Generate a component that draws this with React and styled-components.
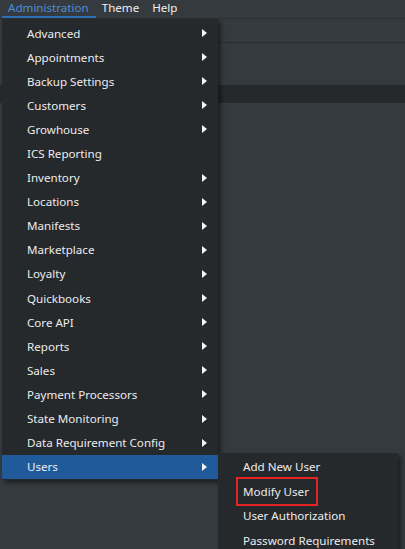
import React from "react";
import styled, { createGlobalStyle } from "styled-components";

const GlobalStyle = createGlobalStyle`
  html, body {
    margin: 0;
    padding: 0;
    background: #353a3e;
    font-family: "Noto Sans", "Open Sans", sans-serif;
    font-size: 12px;
    color: #e6e6e6;
  }
`;

const Page = styled.div`
  position: relative;
  width: 405px;
  height: 549px;
  overflow: hidden;
  background: #353a3e;
`;

const MenuBar = styled.div`
  display: flex;
  height: 18px;
  padding-left: 2px;
  border-bottom: 1px solid #2b2f32;
  background: #353a3e;
`;

const MenuTitle = styled.div`
  padding: 0 7px 0 6px;
  height: 16px;
  line-height: 16px;
  font-size: 11.6px;
  color: ${(p) => (p.$active ? "#4b8fd8" : "#f0f0f0")};
  border-bottom: 2px solid ${(p) => (p.$active ? "#2f6fb5" : "transparent")};
`;

const Band = styled.div`
  height: ${(p) => p.$h}px;
  background: ${(p) => p.$bg || "#353a3e"};
  border-bottom: ${(p) => (p.$line ? "1px solid #2a2e31" : "none")};
`;

const Dropdown = styled.ul`
  position: absolute;
  left: 2px;
  top: 19px;
  width: 216px;
  margin: 0;
  padding: 2px 0 1px;
  list-style: none;
  background: #25292c;
  box-shadow: 3px 3px 4px rgba(0, 0, 0, 0.45);
`;

const Item = styled.li`
  position: relative;
  display: flex;
  align-items: center;
  height: 24.1px;
  padding-left: 25px;
  padding-right: 11px;
  background: ${(p) => (p.$open ? "#215a9a" : "transparent")};
  color: #ececec;
  font-size: 11.6px;
`;

const Label = styled.span`
  flex: 1;
`;

const Arrow = styled.span`
  width: 0;
  height: 0;
  border-top: 4px solid transparent;
  border-bottom: 4px solid transparent;
  border-left: 5px solid #f4f4f4;
`;

const Submenu = styled.ul`
  position: absolute;
  left: 216px;
  top: -2px;
  width: 180px;
  margin: 0;
  padding: 2px 0 6px;
  list-style: none;
  background: #25292c;
  box-shadow: 3px 3px 4px rgba(0, 0, 0, 0.45);
`;

const SubItem = styled.li`
  display: flex;
  align-items: center;
  height: 24.5px;
  padding-left: 25px;
  color: #ececec;
  font-size: 11.6px;
`;

const Marked = styled.span`
  margin-left: -7px;
  padding: 5px 7px 5px 5px;
  border: 2px solid #e52424;
`;

const items = [
  { label: "Advanced", sub: true },
  { label: "Appointments", sub: true },
  { label: "Backup Settings", sub: true },
  { label: "Customers", sub: true },
  { label: "Growhouse", sub: true },
  { label: "ICS Reporting", sub: false },
  { label: "Inventory", sub: true },
  { label: "Locations", sub: true },
  { label: "Manifests", sub: true },
  { label: "Marketplace", sub: true },
  { label: "Loyalty", sub: true },
  { label: "Quickbooks", sub: true },
  { label: "Core API", sub: true },
  { label: "Reports", sub: true },
  { label: "Sales", sub: true },
  { label: "Payment Processors", sub: true },
  { label: "State Monitoring", sub: true },
  { label: "Data Requirement Config", sub: true },
];

const userItems = [
  "Add New User",
  "Modify User",
  "User Authorization",
  "Password Requirements",
];

const App = () => {
  return (
    <Page>
      <GlobalStyle />
      <MenuBar>
        <MenuTitle $active>Administration</MenuTitle>
        <MenuTitle>Theme</MenuTitle>
        <MenuTitle>Help</MenuTitle>
      </MenuBar>

      <Band $h={23} $line />
      <Band $h={42} />
      <Band $h={18} $bg="#25292c" />

      <Dropdown>
        {items.map((item) => (
          <Item key={item.label}>
            <Label>{item.label}</Label>
            {item.sub && <Arrow />}
          </Item>
        ))}
        <Item $open>
          <Label>Users</Label>
          <Arrow />
          <Submenu>
            {userItems.map((label) => (
              <SubItem key={label}>
                {label === "Modify User" ? <Marked>{label}</Marked> : label}
              </SubItem>
            ))}
          </Submenu>
        </Item>
      </Dropdown>
    </Page>
  );
};

export default App;
